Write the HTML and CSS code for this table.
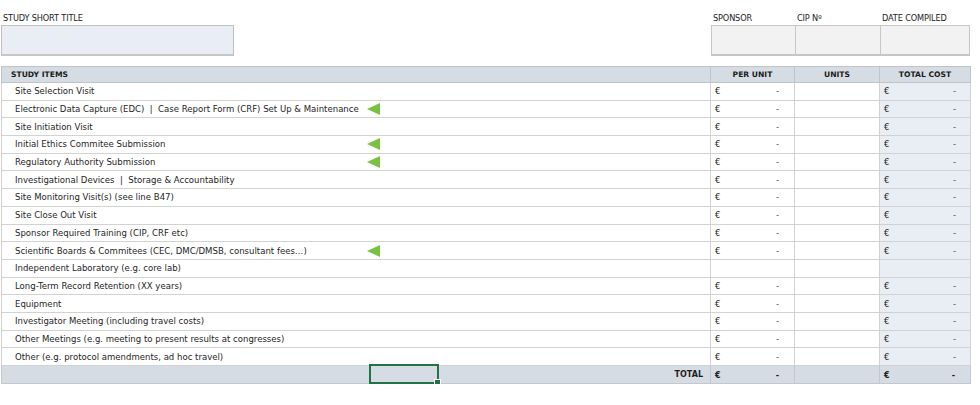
FILE: index.html
```html
<!DOCTYPE html>
<html>
<head>
<meta charset="utf-8">
<link rel="stylesheet" href="styles.css">
</head>
<body>
<div class="page">
  <div class="top">
    <div class="title-block">
      <div class="label">STUDY SHORT TITLE</div>
      <div class="title-box"></div>
    </div>
    <div class="meta">
      <div class="meta-col w84"><div class="label">SPONSOR</div><div class="meta-box"></div></div>
      <div class="meta-col w85"><div class="label">CIP Nº</div><div class="meta-box"></div></div>
      <div class="meta-col w90"><div class="label">DATE COMPILED</div><div class="meta-box"></div></div>
    </div>
  </div>
  <table class="grid">
    <colgroup><col class="c1"><col class="c2"><col class="c3"><col class="c4"></colgroup>
    <thead>
      <tr><th class="items">STUDY ITEMS</th><th>PER UNIT</th><th>UNITS</th><th>TOTAL COST</th></tr>
    </thead>
    <tbody>
      <tr><td class="item">Site Selection Visit</td><td class="money"><span>€</span><span>-</span></td><td></td><td class="money tc"><span>€</span><span>-</span></td></tr>
      <tr><td class="item">Electronic Data Capture (EDC) &nbsp;|&nbsp; Case Report Form (CRF) Set Up &amp; Maintenance<i class="tri"></i></td><td class="money"><span>€</span><span>-</span></td><td></td><td class="money tc"><span>€</span><span>-</span></td></tr>
      <tr><td class="item">Site Initiation Visit</td><td class="money"><span>€</span><span>-</span></td><td></td><td class="money tc"><span>€</span><span>-</span></td></tr>
      <tr><td class="item">Initial Ethics Commitee Submission<i class="tri"></i></td><td class="money"><span>€</span><span>-</span></td><td></td><td class="money tc"><span>€</span><span>-</span></td></tr>
      <tr><td class="item">Regulatory Authority Submission<i class="tri"></i></td><td class="money"><span>€</span><span>-</span></td><td></td><td class="money tc"><span>€</span><span>-</span></td></tr>
      <tr><td class="item">Investigational Devices &nbsp;|&nbsp; Storage &amp; Accountability</td><td class="money"><span>€</span><span>-</span></td><td></td><td class="money tc"><span>€</span><span>-</span></td></tr>
      <tr><td class="item">Site Monitoring Visit(s) (see line B47)</td><td class="money"><span>€</span><span>-</span></td><td></td><td class="money tc"><span>€</span><span>-</span></td></tr>
      <tr><td class="item">Site Close Out Visit</td><td class="money"><span>€</span><span>-</span></td><td></td><td class="money tc"><span>€</span><span>-</span></td></tr>
      <tr><td class="item">Sponsor Required Training (CIP, CRF etc)</td><td class="money"><span>€</span><span>-</span></td><td></td><td class="money tc"><span>€</span><span>-</span></td></tr>
      <tr><td class="item">Scientific Boards &amp; Commitees (CEC, DMC/DMSB, consultant fees…)<i class="tri"></i></td><td class="money"><span>€</span><span>-</span></td><td></td><td class="money tc"><span>€</span><span>-</span></td></tr>
      <tr><td class="item">Independent Laboratory (e.g. core lab)</td><td></td><td></td><td class="tc"></td></tr>
      <tr><td class="item">Long-Term Record Retention (XX years)</td><td class="money"><span>€</span><span>-</span></td><td></td><td class="money tc"><span>€</span><span>-</span></td></tr>
      <tr><td class="item">Equipment</td><td class="money"><span>€</span><span>-</span></td><td></td><td class="money tc"><span>€</span><span>-</span></td></tr>
      <tr><td class="item">Investigator Meeting (including travel costs)</td><td class="money"><span>€</span><span>-</span></td><td></td><td class="money tc"><span>€</span><span>-</span></td></tr>
      <tr><td class="item">Other Meetings (e.g. meeting to present results at congresses)</td><td class="money"><span>€</span><span>-</span></td><td></td><td class="money tc"><span>€</span><span>-</span></td></tr>
      <tr><td class="item">Other (e.g. protocol amendments, ad hoc travel)</td><td class="money"><span>€</span><span>-</span></td><td></td><td class="money tc"><span>€</span><span>-</span></td></tr>
    </tbody>
    <tfoot>
      <tr><td class="total-label"><span class="sel"></span>TOTAL</td><td class="money"><span>€</span><span>-</span></td><td></td><td class="money"><span>€</span><span>-</span></td></tr>
    </tfoot>
  </table>
</div>
</body>
</html>
```
FILE: styles.css
```css
* { box-sizing: border-box; }
html, body { margin: 0; padding: 0; background: #fff; }
body {
  font-family: "DejaVu Sans", "Liberation Sans", sans-serif;
  font-size: 8.55px;
  color: #1e1e1e;
}
.page { padding: 12px 0 0 1px; width: 980px; }
.top { display: flex; justify-content: space-between; width: 969px; height: 54px; }
.label { font-size: 8.2px; line-height: 13px; padding-left: 2px; color: #222; letter-spacing: -0.15px; }
.title-box {
  width: 233px; height: 31px;
  background: #e9edf4;
  border: 1px solid #bfbfbf;
  border-bottom: 2px solid #c6c6c6;
}
.meta { display: flex; }
.meta-box {
  height: 31px;
  background: #f2f2f2;
  border: 1px solid #c6c6c6;
  border-right: none;
  border-bottom: 2px solid #c6c6c6;
}
.meta-col:last-child .meta-box { border-right: 1px solid #c6c6c6; }
.w84 { width: 84px; }
.w85 { width: 85px; }
.w90 { width: 90px; }
.grid {
  border-collapse: collapse;
  table-layout: fixed;
  width: 969px;
}
.c1 { width: 709px; }
.c2 { width: 84px; }
.c3 { width: 85px; }
.c4 { width: 91px; }
.grid th {
  background: #d6dce4;
  font-weight: bold;
  font-size: 7.6px;
  height: 16px;
  padding: 0;
  border: 1px solid #bfc4cb;
  text-align: center;
  color: #1a1a1a;
}
.grid th.items { text-align: left; padding-left: 9px; }
.grid td {
  height: 17.7px;
  padding: 0;
  border: 1px solid #d2d2d2;
  white-space: nowrap;
  position: relative;
}
.grid td.item { padding-left: 13px; }
.grid td.tc { background: #e9edf4; }
.money span:first-child { position: absolute; left: 4px; top: 50%; transform: translateY(-50%); }
.money span:last-child { position: absolute; right: 15px; top: 50%; transform: translateY(-50%); color: #555; }
.tc.money span:last-child { right: 14px; }
.tri {
  position: absolute;
  left: 365px;
  top: 50%;
  margin-top: -6px;
  width: 0; height: 0;
  border-top: 6px solid transparent;
  border-bottom: 6px solid transparent;
  border-right: 13px solid #7ac143;
}
.grid tfoot td {
  background: #d6dce4;
  border: 1px solid #c3c8cf;
  font-weight: bold;
  font-size: 8px;
  height: 18px;
}
.grid tfoot .money span:last-child { color: #1a1a1a; }
.total-label { text-align: right; padding-right: 7px !important; }
.sel {
  position: absolute;
  left: 367px;
  top: -2px;
  width: 70px;
  height: 20px;
  border: 2px solid #217346;
}
.sel::after {
  content: "";
  position: absolute;
  right: -4px; bottom: -4px;
  width: 5px; height: 5px;
  background: #217346;
  border: 1px solid #fff;
}
```
